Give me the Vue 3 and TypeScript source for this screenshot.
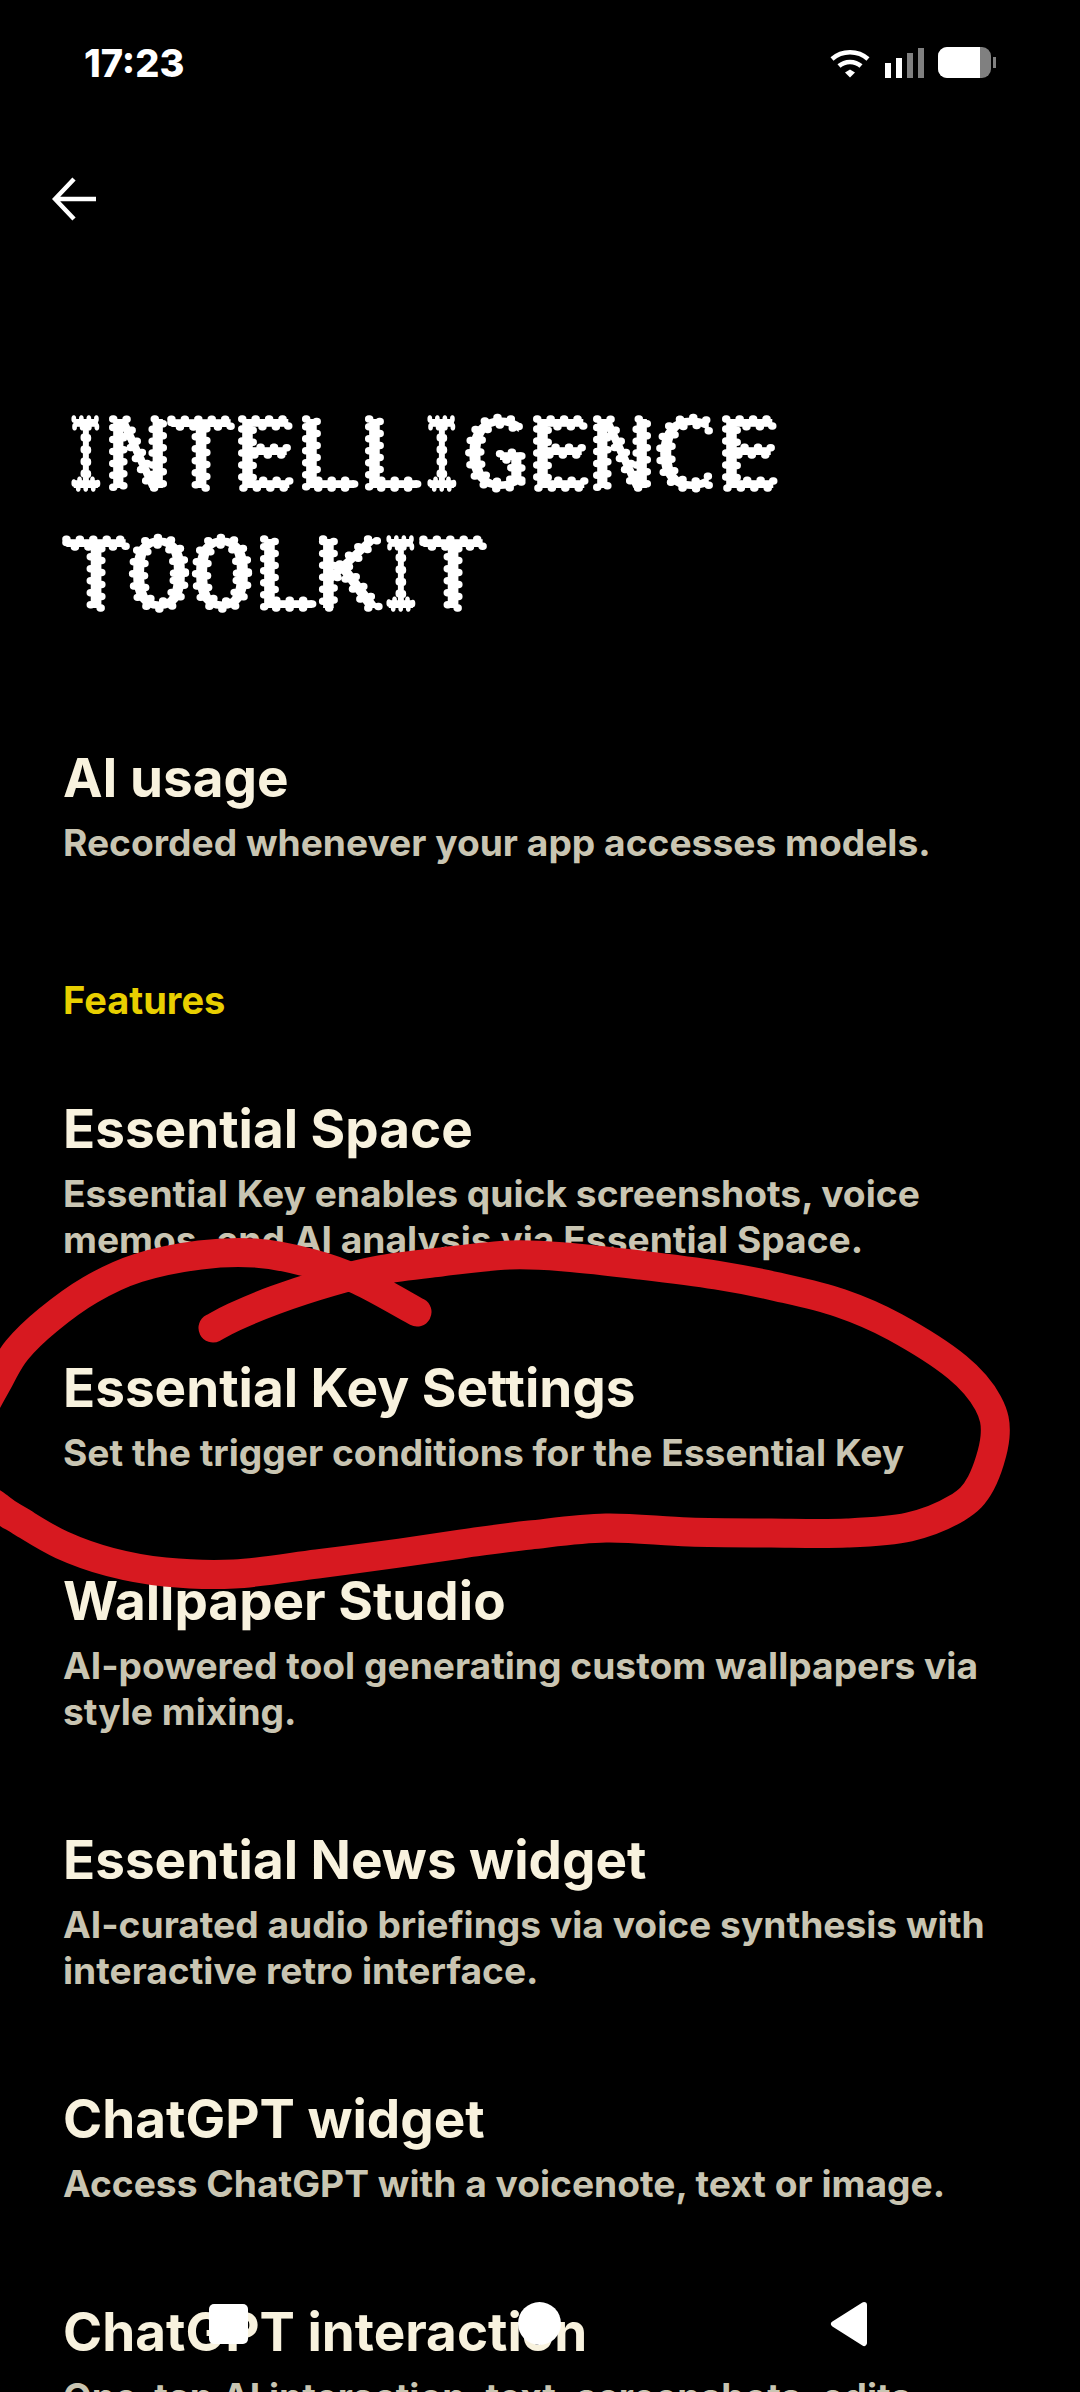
<script setup lang="ts">
interface Row { title: string; lines: string[] }
interface Glyph { ch: string; cx: number; narrow: boolean }

const rows: Row[] = [
  { title: 'Essential Space', lines: ['Essential Key enables quick screenshots, voice', 'memos, and AI analysis via Essential Space.'] },
  { title: 'Essential Key Settings', lines: ['Set the trigger conditions for the Essential Key'] },
  { title: 'Wallpaper Studio', lines: ['AI-powered tool generating custom wallpapers via', 'style mixing.'] },
  { title: 'Essential News widget', lines: ['AI-curated audio briefings via voice synthesis with', 'interactive retro interface.'] },
  { title: 'ChatGPT widget', lines: ['Access ChatGPT with a voicenote, text or image.'] },
  { title: 'ChatGPT interaction', lines: ['One-tap AI interaction, text, screenshots, edits'] }
]

const STRETCH = 1.12
function glyphs(word: string, centres: number[]): Glyph[] {
  return word.split('').map((ch, i) => ({ ch, cx: +(centres[i] / STRETCH).toFixed(1), narrow: ch === 'I' }))
}
const lineOne = glyphs('INTELLIGENCE', [86, 138, 201, 264, 327, 390, 442, 496, 559, 622, 685, 748])
const lineTwo = glyphs('TOOLKIT', [96, 159, 222, 285, 348, 401, 453])

// Scribble centre-line, in reference pixels
const scribble: [number, number][] = [
  [417, 1312], [358, 1280], [310, 1263], [255, 1253], [200, 1255], [138, 1268], [90, 1290], [48, 1320], [17, 1350], [0, 1378],
  [-28, 1435], [-28, 1482], [0, 1508], [20, 1521], [62, 1545], [110, 1562], [165, 1572], [234, 1574], [317, 1564], [400, 1553],
  [468, 1543], [530, 1535], [606, 1528], [689, 1532], [771, 1533], [847, 1533], [909, 1527], [957, 1508], [981, 1483], [995, 1437],
  [988, 1403], [957, 1367], [895, 1327], [840, 1303], [778, 1287], [716, 1275], [640, 1265], [565, 1257], [510, 1255], [441, 1262],
  [379, 1270], [330, 1282], [275, 1300], [234, 1317], [213, 1328]
]

function smooth(p: [number, number][]): string {
  let d = `M${p[0][0]} ${p[0][1]}`
  for (let i = 0; i < p.length - 1; i++) {
    const a = p[Math.max(i - 1, 0)]
    const b = p[i]
    const c = p[i + 1]
    const e = p[Math.min(i + 2, p.length - 1)]
    const c1x = b[0] + (c[0] - a[0]) / 6
    const c1y = b[1] + (c[1] - a[1]) / 6
    const c2x = c[0] - (e[0] - b[0]) / 6
    const c2y = c[1] - (e[1] - b[1]) / 6
    d += `C${c1x.toFixed(1)} ${c1y.toFixed(1)} ${c2x.toFixed(1)} ${c2y.toFixed(1)} ${c[0]} ${c[1]}`
  }
  return d
}
const scribblePath = smooth(scribble)
</script>

<template>
  <div class="screen">
    <header class="status">
      <span class="clock">17:23</span>
      <div class="status-icons">
        <svg class="wifi" width="40" height="29" viewBox="0 0 40 29" fill="none">
          <path d="M2 10C12 1 28 1 38 10" stroke="#fff" stroke-width="4.5" />
          <path d="M9 17C15 11.5 25 11.5 31 17" stroke="#fff" stroke-width="4.5" />
          <path d="M15 23.5L20 20.5L25 23.5L20 28.5Z" fill="#fff" />
        </svg>
        <div class="signal">
          <i class="bar on b1"></i><i class="bar on b2"></i><i class="bar b3"></i><i class="bar b4"></i>
        </div>
        <div class="battery"><div class="cell"><div class="level"></div></div><i class="nub"></i></div>
      </div>
    </header>

    <div class="back-row">
      <svg width="44" height="44" viewBox="0 0 44 44" fill="none">
        <path d="M44 22H3M22 2L3 22L22 42" stroke="#fff" stroke-width="4.5" />
      </svg>
    </div>

    <svg class="headline" width="1080" height="240" viewBox="0 0 1080 240">
      <g class="stretch">
        <text y="88.2">
          <tspan v-for="(g, i) in lineOne" :key="i" :x="g.cx" :textLength="g.narrow ? 32 : undefined" :lengthAdjust="g.narrow ? 'spacingAndGlyphs' : undefined">{{ g.ch }}</tspan>
        </text>
        <text y="208.2">
          <tspan v-for="(g, i) in lineTwo" :key="i" :x="g.cx" :textLength="g.narrow ? 32 : undefined" :lengthAdjust="g.narrow ? 'spacingAndGlyphs' : undefined">{{ g.ch }}</tspan>
        </text>
      </g>
    </svg>

    <section class="row first">
      <h2>AI usage</h2>
      <p>Recorded whenever your app accesses models.</p>
    </section>

    <h3 class="group">Features</h3>

    <section v-for="row in rows" :key="row.title" class="row">
      <h2>{{ row.title }}</h2>
      <p v-for="line in row.lines" :key="line">{{ line }}</p>
    </section>

    <svg class="scribble" width="1080" height="2392" viewBox="0 0 1080 2392" fill="none">
      <path :d="scribblePath" stroke="#d71920" stroke-width="29" stroke-linecap="round" stroke-linejoin="round" />
    </svg>

    <nav class="nav">
      <i class="nav-square"></i>
      <i class="nav-circle"></i>
      <svg class="nav-back" width="40" height="46" viewBox="0 0 40 46">
        <path d="M34 4L4 23L34 42Z" fill="#fff" stroke="#fff" stroke-width="6" stroke-linejoin="round" />
      </svg>
    </nav>
  </div>
</template>

<style scoped>
.screen {
  position: relative;
  width: 1080px;
  height: 2392px;
  overflow: hidden;
  background: #000;
  font-family: Inter, "Liberation Sans", sans-serif;
}
.status {
  display: flex;
  justify-content: space-between;
  align-items: flex-start;
  height: 159px;
  padding: 46px 84px 0 84px;
  box-sizing: border-box;
}
.clock {
  color: #fff;
  font-size: 38px;
  line-height: 34px;
  font-weight: 800;
}
.status-icons {
  display: flex;
  align-items: flex-end;
  height: 32px;
}
.wifi { margin-right: 15px; }
.signal {
  display: flex;
  align-items: flex-end;
  gap: 5px;
  margin-right: 14px;
}
.bar { display: block; width: 6px; background: #808080; }
.bar.on { background: #fff; }
.b1 { height: 15px; }
.b2 { height: 20px; }
.b3 { height: 25px; }
.b4 { height: 30px; }
.battery { display: flex; align-items: center; gap: 2px; }
.cell {
  width: 53px;
  height: 31px;
  border-radius: 9px;
  background: #808080;
  overflow: hidden;
}
.level { width: 42px; height: 100%; background: #fff; }
.nub { display: block; width: 3px; height: 11px; background: #808080; }
.back-row {
  height: 80px;
  padding-left: 52px;
  display: flex;
  align-items: center;
}
.headline {
  display: block;
  margin-top: 161px;
  overflow: visible;
}
.stretch { transform: scaleX(1.12); }
.headline text {
  font-family: "DejaVu Sans Mono", monospace;
  font-size: 95px;
  text-anchor: middle;
  fill: #fff;
  stroke: #fff;
  stroke-width: 7.5px;
  stroke-linecap: round;
  stroke-dasharray: 0 12;
}
.row { padding: 0 63px; margin-bottom: 95px; }
.row.first { margin-top: 108px; margin-bottom: 0; }
.row h2 {
  margin: 0 0 12px;
  color: #f8f2de;
  font-size: 53px;
  line-height: 60px;
  font-weight: 650;
}
.row p {
  margin: 0;
  color: #c9c5b2;
  font-size: 37.2px;
  line-height: 46px;
  font-weight: 660;
}
.group {
  margin: 114px 0 79px;
  padding: 0 63px;
  color: #e8cf00;
  font-size: 38px;
  line-height: 40px;
  font-weight: 700;
}
.scribble {
  position: absolute;
  left: 0;
  top: 0;
  pointer-events: none;
}
.nav-square {
  position: absolute;
  left: 209px;
  top: 2304px;
  width: 39px;
  height: 40px;
  border-radius: 5px;
  background: #fff;
}
.nav-circle {
  position: absolute;
  left: 518px;
  top: 2302px;
  width: 43px;
  height: 43px;
  border-radius: 50%;
  background: #fff;
}
.nav-back {
  position: absolute;
  left: 830px;
  top: 2301px;
}
</style>
